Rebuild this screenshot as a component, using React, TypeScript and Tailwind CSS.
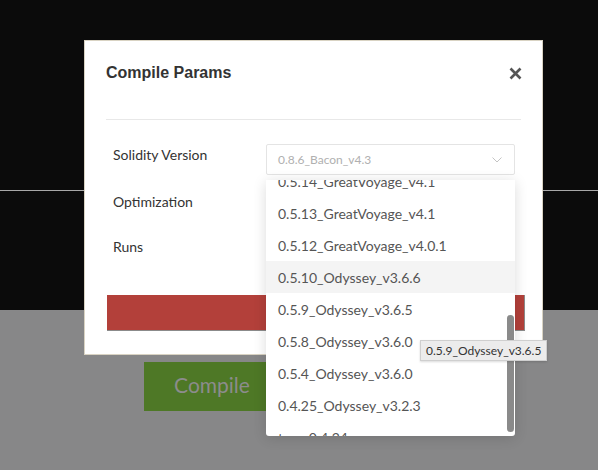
import React from "react";

const items = [
  "0.5.14_GreatVoyage_v4.1",
  "0.5.13_GreatVoyage_v4.1",
  "0.5.12_GreatVoyage_v4.0.1",
  "0.5.10_Odyssey_v3.6.6",
  "0.5.9_Odyssey_v3.6.5",
  "0.5.8_Odyssey_v3.6.0",
  "0.5.4_Odyssey_v3.6.0",
  "0.4.25_Odyssey_v3.2.3",
  "tron-0.4.24",
];

export default function App() {
  return (
    <div className="relative w-[598px] h-[470px] overflow-hidden font-['Lato','Noto_Sans',sans-serif]">
      {/* background */}
      <div className="flex flex-col h-full">
        <div className="h-[310px] bg-[#0b0b0b] flex flex-col">
          <div className="h-[190px]" />
          <div className="h-px bg-[#a8a8a8]" />
        </div>
        <div className="flex-1 bg-[#878788] pl-[144px] pt-[52px]">
          <div className="w-[122px] h-[49px] bg-[#4e7826] flex items-center justify-center pl-[14px] pb-[3px] text-[21px] text-[#8c8c8c]">
            Compile
          </div>
        </div>
      </div>

      {/* modal */}
      <div className="absolute left-[84px] top-[40px] w-[459px] h-[315px] bg-white border border-[#d9d3c3] flex flex-col">
        <div className="flex items-center justify-between pl-[21px] pr-[21px] h-[63px] pt-[1px]">
          <span className="font-['Liberation_Sans',Arial,sans-serif] font-bold text-[16px] text-[#333]">
            Compile Params
          </span>
          <svg width="13" height="13" viewBox="0 0 13 13" className="mr-[-1px]">
            <path d="M1.5 1.5 L11.5 11.5 M11.5 1.5 L1.5 11.5" stroke="#555" strokeWidth="2.6" />
          </svg>
        </div>
        <div className="mx-[21px] h-px bg-[#e8e8e8] mt-[15px]" />
        <div className="flex flex-col pl-[28px] pt-[24px]">
          <div className="flex items-start h-[31px]">
            <span className="w-[153px] text-[14px] text-[#333] leading-[21px]">Solidity Version</span>
            <div className="w-[249px] h-[31px] border border-[#e4e4e4] rounded-[2px] flex items-center justify-between pl-[11px] pr-[12px]">
              <span className="text-[12px] text-[#b0b0b0]">0.8.6_Bacon_v4.3</span>
              <svg width="10" height="6" viewBox="0 0 10 6">
                <path d="M0.5 0.5 L5 5 L9.5 0.5" stroke="#c4c4c4" strokeWidth="1" fill="none" />
              </svg>
            </div>
          </div>
          <div className="h-[21px] leading-[21px] mt-[16px] text-[14px] text-[#333]">Optimization</div>
          <div className="h-[21px] leading-[21px] mt-[24px] text-[14px] text-[#333]">Runs</div>
        </div>
        <div className="mt-[38px] ml-[22px] w-[418px] h-[36px] bg-[#b3403a] border-b border-r border-[#8b8b8b]" />
      </div>

      {/* dropdown */}
      <div className="absolute left-[266px] top-[180px] w-[249px] h-[256px] bg-white overflow-hidden rounded-b-[3px] shadow-[0_2px_14px_rgba(0,0,0,0.14)]">
        <div className="flex flex-col mt-[-15px]">
          {items.map((it, i) => (
            <div
              key={it}
              className={
                i === 3
                  ? "h-[32px] flex items-center pl-[12px] text-[14px] text-[#555] bg-[#f4f4f4]"
                  : "h-[32px] flex items-center pl-[12px] text-[14px] text-[#555]"
              }
            >
              {it}
            </div>
          ))}
        </div>
        <div className="absolute left-[241px] top-[135px] w-[7px] h-[117px] rounded-full bg-[#8a8a8a]" />
      </div>

      {/* tooltip */}
      <div className="absolute left-[420px] top-[340px] h-[21px] px-[5px] flex items-center bg-[#ececec] border border-[#cfcfcf] shadow-[0_1px_2px_rgba(0,0,0,0.15)] text-[12px] text-[#333]">
        0.5.9_Odyssey_v3.6.5
      </div>
    </div>
  );
}
